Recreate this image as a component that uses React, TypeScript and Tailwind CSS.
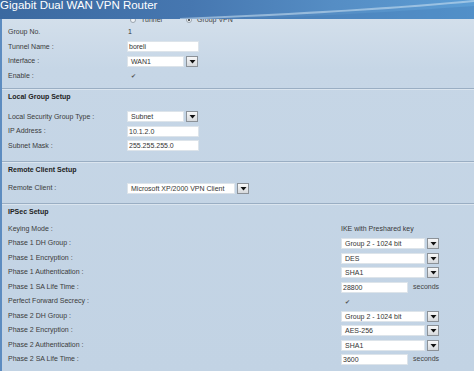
import React from "react";

type RowProps = {
  label: string;
  lw: string;
  children?: React.ReactNode;
};

const Arrow = () => (
  <svg width="7" height="5" viewBox="0 0 7 5">
    <path d="M0.5 1h6L3.5 4.5z" fill="#111" />
  </svg>
);

const Select = ({ value, w }: { value: string; w: string }) => (
  <div className="flex items-center gap-[2px]">
    <div
      className={`${w} h-[11px] bg-white border border-[#dde4ea] pl-[3px] leading-[9px] text-[7px] text-[#333]`}
    >
      {value}
    </div>
    <div className="w-[12px] h-[11px] border border-[#8c9298] bg-gradient-to-b from-[#f8f8f8] to-[#d6d9dc] flex items-center justify-center">
      <Arrow />
    </div>
  </div>
);

const Input = ({ value, w }: { value: string; w: string }) => (
  <div
    className={`${w} h-[11px] bg-white border border-[#dde4ea] pl-[1px] leading-[9px] text-[7px] text-[#333]`}
  >
    {value}
  </div>
);

const Check = ({ ml }: { ml: string }) => (
  <span className={`${ml} text-[6px] leading-none text-[#555] font-['DejaVu_Sans',sans-serif]`}>
    ✔
  </span>
);

const Row = ({ label, lw, children }: RowProps) => (
  <div className="flex items-center h-[14.5px] pl-[6px]">
    <div className={`${lw} shrink-0 whitespace-nowrap`}>{label}</div>
    {children}
  </div>
);

const Heading = ({ title, mb }: { title: string; mb: string }) => (
  <div className={`h-[15px] ${mb} pl-[6px] flex items-center font-bold text-[#222]`}>
    {title}
  </div>
);

const Separator = () => (
  <div className="h-[2px] border-t border-[#9aaec3] bg-[#dbe5ef]" />
);

const Radio = ({ on }: { on?: boolean }) => (
  <span className="w-[6px] h-[6px] rounded-full border border-[#9aa4ae] bg-[#eef2f6] flex items-center justify-center">
    {on && <span className="w-[2px] h-[2px] rounded-full bg-[#222]" />}
  </span>
);

const Seconds = ({ value }: { value: string }) => (
  <div className="flex items-center">
    <Input value={value} w="w-[67px]" />
    <span className="ml-[5px] text-[#444]">seconds</span>
  </div>
);

export default function App() {
  const a = "w-[119px]";
  const b = "w-[333px]";
  return (
    <div className="w-[474px] h-[371px] overflow-hidden font-['Liberation_Sans',Arial,sans-serif] text-[7px] text-[#3b3b3b]">
      <div className="relative h-[19px] bg-[linear-gradient(90deg,#3b69a0_0%,#4677b0_40%,#558dc4_70%,#5c9dd4_100%)] overflow-hidden">
        <svg className="absolute inset-0" width="474" height="19" viewBox="0 0 474 19">
          <path d="M180 19 C 300 14, 400 8, 474 1" stroke="#cfe3f3" strokeOpacity="0.55" strokeWidth="2" fill="none" />
          <path d="M250 19 C 340 15, 420 10, 474 6 L474 19 Z" fill="#3f78b4" fillOpacity="0.35" />
        </svg>
        <div className="relative text-[11.5px] leading-[13px] text-white -mt-[1px] whitespace-nowrap">
          Gigabit Dual WAN VPN Router
        </div>
      </div>

      <div className="h-[352px] border-l-2 border-[#5d8cc0] bg-[linear-gradient(180deg,#d3dfeb_0px,#c6d6e6_50px,#c2d3e4_100%)]">
        <div className="h-[6px] overflow-hidden flex items-end">
          <div className="flex items-center h-[11px] leading-[11px] text-[#444]">
            <span className="w-[128px]" />
            <Radio />
            <span className="ml-[5px] w-[45px]">Tunnel</span>
            <Radio on />
            <span className="ml-[5px]">Group VPN</span>
          </div>
        </div>

        <Row label="Group No." lw={a}>
          <span className="ml-[1px] text-[#333]">1</span>
        </Row>
        <Row label="Tunnel Name :" lw={a}>
          <Input value="boreli" w="w-[72px]" />
        </Row>
        <Row label="Interface :" lw={a}>
          <Select value="WAN1" w="w-[57px]" />
        </Row>
        <Row label="Enable :" lw={a}>
          <Check ml="ml-[4px]" />
        </Row>
        <div className="h-[5px]" />
        <Separator />

        <Heading title="Local Group Setup" mb="mb-[4.5px]" />
        <Row label="Local Security Group Type :" lw={a}>
          <Select value="Subnet" w="w-[57px]" />
        </Row>
        <Row label="IP Address :" lw={a}>
          <Input value="10.1.2.0" w="w-[72px]" />
        </Row>
        <Row label="Subnet Mask :" lw={a}>
          <Input value="255.255.255.0" w="w-[72px]" />
        </Row>
        <div className="h-[8px]" />
        <Separator />

        <Heading title="Remote Client Setup" mb="mb-[2.75px]" />
        <Row label="Remote Client :" lw={a}>
          <Select value="Microsoft XP/2000 VPN Client" w="w-[108px]" />
        </Row>
        <div className="h-[7.75px]" />
        <Separator />

        <Heading title="IPSec Setup" mb="mb-[1.75px]" />
        <Row label="Keying Mode :" lw={b}>
          <span className="text-[#3a3a3a]">IKE with Preshared key</span>
        </Row>
        <Row label="Phase 1 DH Group :" lw={b}>
          <Select value="Group 2 - 1024 bit" w="w-[84px]" />
        </Row>
        <Row label="Phase 1 Encryption :" lw={b}>
          <Select value="DES" w="w-[84px]" />
        </Row>
        <Row label="Phase 1 Authentication :" lw={b}>
          <Select value="SHA1" w="w-[84px]" />
        </Row>
        <Row label="Phase 1 SA Life Time :" lw={b}>
          <Seconds value="28800" />
        </Row>
        <Row label="Perfect Forward Secrecy :" lw={b}>
          <Check ml="ml-[4px]" />
        </Row>
        <Row label="Phase 2 DH Group :" lw={b}>
          <Select value="Group 2 - 1024 bit" w="w-[84px]" />
        </Row>
        <Row label="Phase 2 Encryption :" lw={b}>
          <Select value="AES-256" w="w-[84px]" />
        </Row>
        <Row label="Phase 2 Authentication :" lw={b}>
          <Select value="SHA1" w="w-[84px]" />
        </Row>
        <Row label="Phase 2 SA Life Time :" lw={b}>
          <Seconds value="3600" />
        </Row>
      </div>
    </div>
  );
}
